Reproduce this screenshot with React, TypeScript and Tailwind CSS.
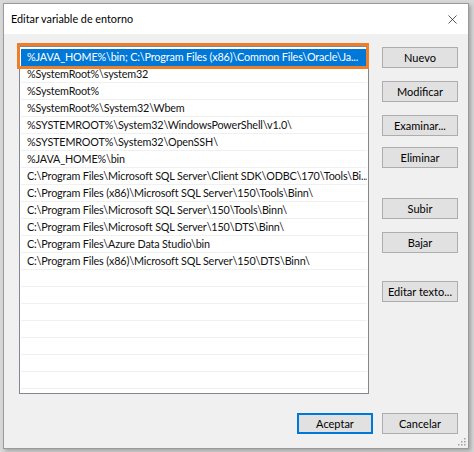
import { X } from 'lucide-react'

const rows = [
  '%JAVA_HOME%\\bin; C:\\Program Files (x86)\\Common Files\\Oracle\\Ja...',
  '%SystemRoot%\\system32',
  '%SystemRoot%',
  '%SystemRoot%\\System32\\Wbem',
  '%SYSTEMROOT%\\System32\\WindowsPowerShell\\v1.0\\',
  '%SYSTEMROOT%\\System32\\OpenSSH\\',
  '%JAVA_HOME%\\bin',
  'C:\\Program Files\\Microsoft SQL Server\\Client SDK\\ODBC\\170\\Tools\\Bi...',
  'C:\\Program Files (x86)\\Microsoft SQL Server\\150\\Tools\\Binn\\',
  'C:\\Program Files\\Microsoft SQL Server\\150\\Tools\\Binn\\',
  'C:\\Program Files\\Microsoft SQL Server\\150\\DTS\\Binn\\',
  'C:\\Program Files\\Azure Data Studio\\bin',
  'C:\\Program Files (x86)\\Microsoft SQL Server\\150\\DTS\\Binn\\',
]

// empty rows below the entries, so the grid lines keep going
const emptyRows = Array.from({ length: 7 }, (_, i) => i)

function WinButton({ label, className = '' }: { label: string; className?: string }) {
  return (
    <button
      className={`w-[76px] h-[21px] bg-[#e1e1e1] border border-[#adadad] text-[11px] text-black leading-none whitespace-nowrap flex items-center justify-center ${className}`}
    >
      {label}
    </button>
  )
}

export default function App() {
  return (
    <div
      className="w-[474px] h-[452px] bg-[#d8d8d8] pt-[3px] pl-[3px] overflow-hidden"
      style={{ fontFamily: 'Lato, "Noto Sans", sans-serif' }}
    >
      <div className="relative w-[466px] h-[446px] border border-[#9a9a9a] bg-[#f0f0f0] flex flex-col shadow-[2px_2px_4px_rgba(0,0,0,0.25)]">
        {/* title bar */}
        <div className="h-[30px] bg-white flex items-center justify-between pl-[7px] pr-[8px]">
          <span className="text-[10.8px] text-black">Editar variable de entorno</span>
          <X className="w-[15px] h-[15px] text-[#222]" strokeWidth={1.2} />
        </div>

        <div className="flex-1 flex flex-col pl-[15px] pr-[9px] pt-[12px]">
          <div className="flex gap-[13px]">
            {/* path list */}
            <div className="relative w-[350px] h-[348px] bg-white border border-[#828790] pt-[2px] px-[1px]">
              {rows.map((r, i) => (
                <div
                  key={i}
                  className={`h-[17px] flex items-center pl-[6px] pr-[1px] text-[10.8px] tracking-[-0.15px] whitespace-nowrap overflow-hidden border-b ${
                    i === 0 ? 'bg-[#0078d7] text-white border-[#0078d7]' : 'text-[#111] border-[#f0f0f0]'
                  }`}
                >
                  {r}
                </div>
              ))}
              {emptyRows.map((i) => (
                <div key={'e' + i} className="h-[17px] border-b border-[#f0f0f0]" />
              ))}
              {/* orange highlight around the selected entry */}
              <div className="absolute left-[-3px] top-[-4px] w-[352px] h-[26px] border-[3px] border-[#ee7f2a]" />
            </div>

            {/* side buttons */}
            <div className="flex flex-col pt-[1px]">
              <WinButton label="Nuevo" />
              <WinButton label="Modificar" className="mt-[13px]" />
              <WinButton label="Examinar..." className="mt-[13px]" />
              <WinButton label="Eliminar" className="mt-[11px]" />
              <WinButton label="Subir" className="mt-[30px]" />
              <WinButton label="Bajar" className="mt-[13px]" />
              <WinButton label="Editar texto..." className="mt-[28px]" />
            </div>
          </div>

          <div className="flex justify-end gap-[9px] mt-[19px] pr-[1px]">
            <WinButton label="Aceptar" className="!border-2 !border-[#0078d7]" />
            <WinButton label="Cancelar" />
          </div>
        </div>

        {/* resize grip */}
        <svg className="absolute right-[2px] bottom-[2px]" width="8" height="8" viewBox="0 0 8 8">
          <rect x="6" y="0" width="1.5" height="1.5" fill="#a0a0a0" />
          <rect x="3" y="3" width="1.5" height="1.5" fill="#a0a0a0" />
          <rect x="6" y="3" width="1.5" height="1.5" fill="#a0a0a0" />
          <rect x="0" y="6" width="1.5" height="1.5" fill="#a0a0a0" />
          <rect x="3" y="6" width="1.5" height="1.5" fill="#a0a0a0" />
          <rect x="6" y="6" width="1.5" height="1.5" fill="#a0a0a0" />
        </svg>
      </div>
    </div>
  )
}
